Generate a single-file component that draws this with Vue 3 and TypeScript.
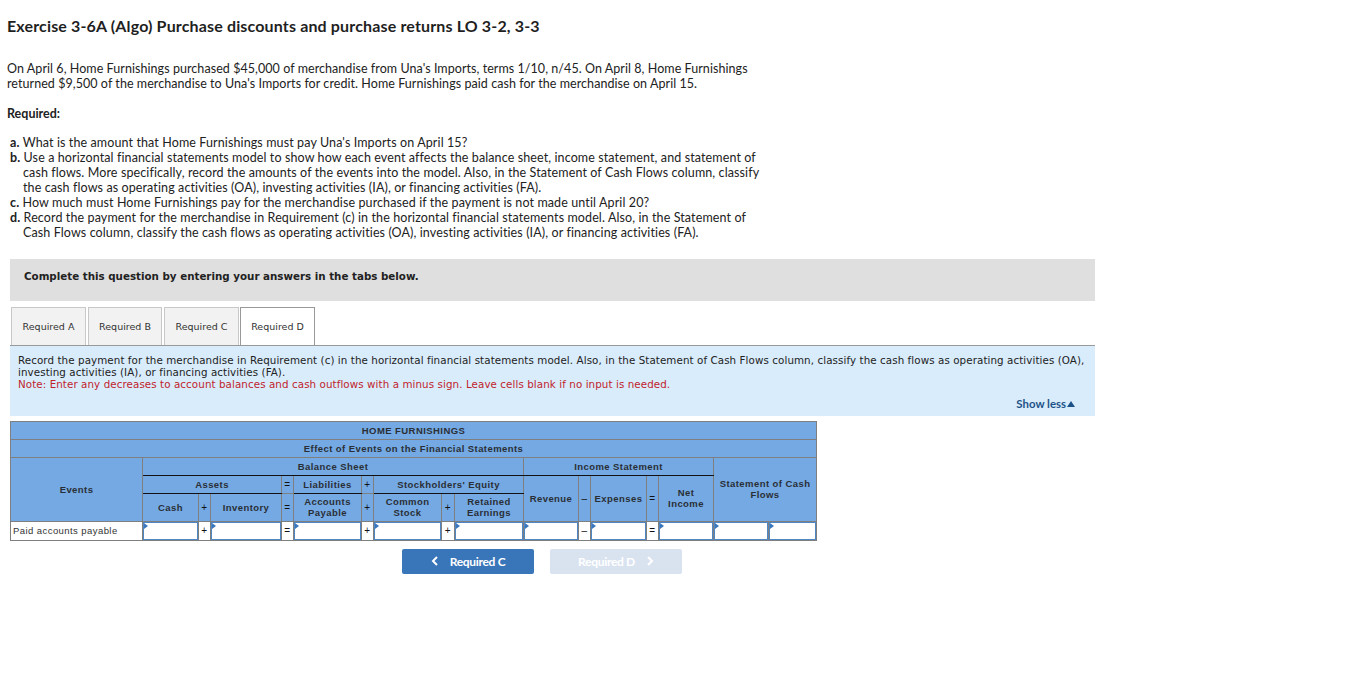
<script setup lang="ts">
const tabs: string[] = ['Required A', 'Required B', 'Required C', 'Required D']
</script>

<template>
  <div class="page">
    <h1 class="title">Exercise 3-6A (Algo) Purchase discounts and purchase returns LO 3-2, 3-3</h1>
    <p class="intro">On April 6, Home Furnishings purchased $45,000 of merchandise from Una's Imports, terms 1/10, n/45. On April 8, Home Furnishings<br>returned $9,500 of the merchandise to Una's Imports for credit. Home Furnishings paid cash for the merchandise on April 15.</p>
    <p class="req-label">Required:</p>
    <ol class="reqs">
      <li><b>a.</b> What is the amount that Home Furnishings must pay Una's Imports on April 15?</li>
      <li><b>b.</b> Use a horizontal financial statements model to show how each event affects the balance sheet, income statement, and statement of cash flows. More specifically, record the amounts of the events into the model. Also, in the Statement of Cash Flows column, classify the cash flows as operating activities (OA), investing activities (IA), or financing activities (FA).</li>
      <li><b>c.</b> How much must Home Furnishings pay for the merchandise purchased if the payment is not made until April 20?</li>
      <li><b>d.</b> Record the payment for the merchandise in Requirement (c) in the horizontal financial statements model. Also, in the Statement of Cash Flows column, classify the cash flows as operating activities (OA), investing activities (IA), or financing activities (FA).</li>
    </ol>

    <div class="banner">Complete this question by entering your answers in the tabs below.</div>

    <div class="tabs">
      <div v-for="(t, i) in tabs" :key="t" class="tab" :class="{ active: i === 3 }">{{ t }}</div>
    </div>

    <div class="panel">
      <p class="panel-text">Record the payment for the merchandise in Requirement (c) in the horizontal financial statements model. Also, in the Statement of Cash Flows column, classify the cash flows as operating activities (OA), investing activities (IA), or financing activities (FA).</p>
      <p class="panel-note">Note: Enter any decreases to account balances and cash outflows with a minus sign. Leave cells blank if no input is needed.</p>
      <div class="show-less">Show less<span class="caret"></span></div>
    </div>

    <table class="model">
      <colgroup>
        <col style="width:132px"><col style="width:56px"><col style="width:12px"><col style="width:71px"><col style="width:12px"><col style="width:68px"><col style="width:12px"><col style="width:68px"><col style="width:13px"><col style="width:69px"><col style="width:55px"><col style="width:12px"><col style="width:56px"><col style="width:12px"><col style="width:55px"><col style="width:55px"><col style="width:48px">
      </colgroup>
      <tbody>
        <tr class="r18"><th colspan="17">HOME FURNISHINGS</th></tr>
        <tr class="r18"><th colspan="17">Effect of Events on the Financial Statements</th></tr>
        <tr class="r18">
          <th rowspan="3">Events</th>
          <th colspan="9" class="dark-b">Balance Sheet</th>
          <th colspan="5" class="dark-b">Income Statement</th>
          <th colspan="2" rowspan="3" class="top-text">Statement of Cash Flows</th>
        </tr>
        <tr class="r18">
          <th colspan="3" class="dark-b">Assets</th>
          <th class="op">=</th>
          <th class="dark-b">Liabilities</th>
          <th class="op">+</th>
          <th colspan="3" class="dark-b">Stockholders' Equity</th>
          <th rowspan="2">Revenue</th>
          <th rowspan="2" class="op">–</th>
          <th rowspan="2">Expenses</th>
          <th rowspan="2" class="op">=</th>
          <th rowspan="2">Net<br>Income</th>
        </tr>
        <tr class="r28">
          <th>Cash</th>
          <th class="op">+</th>
          <th>Inventory</th>
          <th class="op">=</th>
          <th>Accounts<br>Payable</th>
          <th class="op">+</th>
          <th>Common<br>Stock</th>
          <th class="op">+</th>
          <th>Retained<br>Earnings</th>
        </tr>
        <tr class="r19">
          <td class="label">Paid accounts payable</td>
          <td class="in"></td><td class="sign">+</td>
          <td class="in"></td><td class="sign">=</td>
          <td class="in"></td><td class="sign">+</td>
          <td class="in"></td><td class="sign">+</td>
          <td class="in"></td>
          <td class="in"></td><td class="sign">–</td>
          <td class="in"></td><td class="sign">=</td>
          <td class="in"></td>
          <td class="in"></td><td class="in"></td>
        </tr>
      </tbody>
    </table>

    <div class="nav">
      <button class="btn primary" type="button">
        <svg class="chev" width="8" height="10" viewBox="0 0 8 10"><path d="M6 1 2 5l4 4" fill="none" stroke="currentColor" stroke-width="2"/></svg>
        Required C
      </button>
      <button class="btn disabled" type="button">
        Required D
        <svg class="chev" width="8" height="10" viewBox="0 0 8 10"><path d="M2 1l4 4-4 4" fill="none" stroke="currentColor" stroke-width="2"/></svg>
      </button>
    </div>
  </div>
</template>

<style scoped>
.page {
  width: 1348px;
  height: 692px;
  box-sizing: border-box;
  padding: 17px 0 0 0;
  font-family: Lato, "Liberation Sans", sans-serif;
  color: #222;
  background: #fff;
  overflow: hidden;
}
.title {
  margin: 0 0 0 7px;
  font-size: 16px;
  line-height: 18px;
  letter-spacing: 0.15px;
  font-weight: 700;
  color: #1f1f1f;
}
.intro {
  margin: 26px 0 0 7px;
  font-size: 12.5px;
  line-height: 15px;
  letter-spacing: 0.06px;
}
.req-label {
  margin: 15px 0 0 7px;
  font-size: 12.5px;
  line-height: 15px;
  font-weight: 700;
}
.reqs {
  list-style: none;
  margin: 14px 0 0 0;
  padding: 0 0 0 23px;
  width: 740px;
  font-size: 12.5px;
  line-height: 15px;
  letter-spacing: 0.11px;
}
.reqs li { text-indent: -13px; }
.banner {
  margin: 19px 0 0 10px;
  width: 1085px;
  height: 42px;
  box-sizing: border-box;
  padding: 11px 14px;
  background: #dfdfdf;
  font-family: "DejaVu Sans", sans-serif;
  font-size: 10.3px;
  line-height: 13px;
  font-weight: 700;
  color: #222;
}
.tabs {
  display: flex;
  gap: 2px;
  margin: 6px 0 0 11px;
  height: 38px;
}
.tab {
  width: 75px;
  box-sizing: border-box;
  border: 1px solid #c8c8c8;
  border-bottom: 0;
  background: #f2f2f2;
  font-family: "DejaVu Sans", sans-serif;
  font-size: 9.5px;
  line-height: 38px;
  text-align: center;
  color: #333;
}
.tab:nth-child(2) { width: 74px; }
.tab.active {
  background: #fff;
  border-color: #999;
  margin-left: -1px;
  position: relative;
}
.panel {
  margin-left: 10px;
  width: 1085px;
  height: 71px;
  box-sizing: border-box;
  border-top: 1px solid #999;
  background: #d9ecfb;
  padding: 8px 8px 0;
  font-family: "DejaVu Sans", sans-serif;
  font-size: 10.3px;
  letter-spacing: 0.09px;
  line-height: 12px;
  color: #222;
  display: flex;
  flex-direction: column;
}
.panel-text, .panel-note { margin: 0; }
.panel-note { color: #c0232c; }
.show-less {
  margin-top: auto;
  margin-right: 12px;
  margin-bottom: 6px;
  align-self: flex-end;
  font-family: Lato, sans-serif;
  font-weight: 700;
  font-size: 11.4px;
  letter-spacing: 0;
  line-height: 13px;
  color: #1d5288;
  display: flex;
  align-items: center;
  gap: 1px;
}
.caret {
  width: 0;
  height: 0;
  border-left: 4px solid transparent;
  border-right: 4px solid transparent;
  border-bottom: 6px solid #1d5288;
}
.model {
  margin: 5px 0 0 10px;
  width: 807px;
  table-layout: fixed;
  border-collapse: collapse;
  border: 1px solid #7f7f7f;
  font-family: "Liberation Sans", sans-serif;
  font-size: 9.5px;
  letter-spacing: 0.43px;
  color: #222;
}
.model th, .model td {
  border: 1px solid #7f7f7f;
  padding: 0 0 1px;
  text-align: center;
  line-height: 11px;
  overflow: visible;
}
.model th {
  background: #74a9e3;
  font-weight: 700;
  color: #2a2f36;
}
.model .dark-b { border-bottom: 1px solid #111; }
.model .top-text { vertical-align: top; padding-top: 20px; }
.model .op { font-weight: 400; color: #111; font-size: 10px; }
.r18 { height: 18px; }
.r28 { height: 28px; }
.r19 { height: 19px; }
.model td.label {
  background: #fff;
  text-align: left;
  padding-left: 2px;
  font-size: 9.5px;
  white-space: nowrap;
  color: #333;
}
.model td.sign { background: #fff; color: #111; font-size: 10px; }
.model td.in {
  position: relative;
  background: #fff;
  box-shadow: inset 0 0 0 1px #4f87c4;
}
.model td.in::before {
  content: "";
  position: absolute;
  left: 1px;
  top: 1px;
  border-top: 3px solid transparent;
  border-bottom: 3px solid transparent;
  border-left: 4px solid #3a78bd;
}
.nav {
  display: flex;
  gap: 16px;
  margin: 8px 0 0 402px;
}
.btn {
  width: 132px;
  height: 25px;
  border: 0;
  border-radius: 2px;
  padding: 0 0 1px;
  display: flex;
  align-items: center;
  justify-content: center;
  gap: 11px;
  font-family: Lato, sans-serif;
  font-size: 12px;
  font-weight: 700;
  letter-spacing: -0.3px;
  color: #fff;
}
.btn.primary { background: #3975b9; }
.btn.disabled { background: #d9e3f0; }
</style>
